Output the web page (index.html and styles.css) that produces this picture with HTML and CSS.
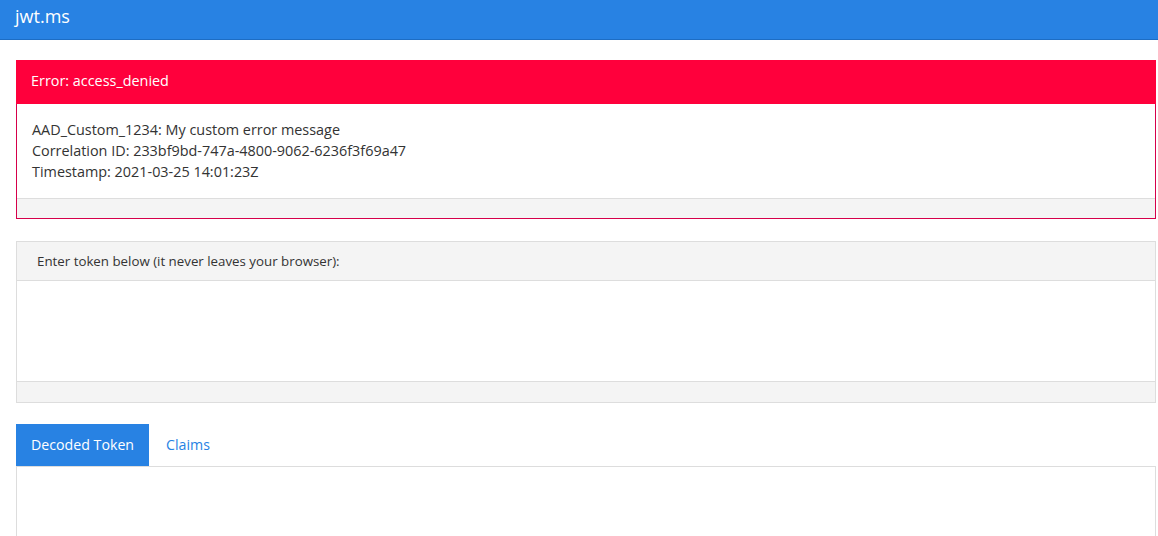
FILE: index.html
```html
<!DOCTYPE html>
<html lang="en">
<head>
    <meta charset="UTF-8">
    <title>jwt.ms</title>
    <link rel="stylesheet" href="styles.css">
</head>
<body>
    <!-- Top bar -->
    <div class="navbar">
        <span class="brand">jwt.ms</span>
    </div>

    <div class="container">
        <!-- Error panel -->
        <div class="panel panel-error">
            <div class="panel-heading">Error: access_denied</div>
            <div class="panel-body">
                <div>AAD_Custom_1234: My custom error message</div>
                <div>Correlation ID: 233bf9bd-747a-4800-9062-6236f3f69a47</div>
                <div>Timestamp: 2021-03-25 14:01:23Z</div>
            </div>
            <div class="panel-footer"></div>
        </div>

        <!-- Token input -->
        <div class="panel panel-token">
            <div class="panel-heading">Enter token below (it never leaves your browser):</div>
            <textarea class="token-input"></textarea>
            <div class="panel-footer"></div>
        </div>

        <!-- Tabs -->
        <div class="tabs">
            <a class="tab active">Decoded Token</a>
            <a class="tab">Claims</a>
        </div>
        <div class="tab-content"></div>
    </div>
</body>
</html>
```

FILE: styles.css
```css
* {
    margin: 0;
    padding: 0;
    box-sizing: border-box;
}

body {
    font-family: 'Open Sans', 'Noto Sans', sans-serif;
    font-size: 14.4px;
    color: #333;
    background-color: #fff;
    overflow: hidden;
}

/* Navbar */
.navbar {
    height: 40px;
    background-color: #2882e3;
    border-bottom: 1px solid #1d6dc4;
    padding: 0 15px;
    display: flex;
    align-items: center;
}

.brand {
    color: #fff;
    font-size: 18px;
    margin-top: -8px;
}

.container {
    padding: 20px 2px 0 16px;
}

/* Panels */
.panel {
    border: 1px solid #ddd;
    margin-bottom: 21px;
}

.panel-error {
    border-color: #d6004a;
    margin-bottom: 22px;
}

.panel-error .panel-heading {
    background-color: #ff003c;
    color: #fff;
    height: 44px;
    padding: 0 15px 3px;
    margin: -1px -1px 0;
    display: flex;
    align-items: center;
}

.panel-body {
    padding: 15px 15px 16px;
    line-height: 21px;
    height: 94px;
}

.panel-footer {
    background-color: #f4f4f4;
    border-top: 1px solid #ddd;
    height: 21px;
}

.panel-error .panel-footer {
    height: 20px;
}

.panel-token .panel-heading {
    background-color: #f4f4f4;
    border-bottom: 1px solid #ddd;
    height: 39px;
    padding: 0 20px;
    font-size: 13.3px;
    display: flex;
    align-items: center;
}

.token-input {
    display: block;
    width: 100%;
    height: 100px;
    border: none;
    resize: none;
    outline: none;
}

/* Tabs */
.tabs {
    display: flex;
    height: 42px;
}

.tab {
    padding: 0 15px 1px;
    display: flex;
    align-items: center;
    font-size: 14.2px;
    color: #2882e3;
    margin-right: 2px;
}

.tab.active {
    background-color: #2882e3;
    color: #fff;
}

.tab-content {
    border: 1px solid #ddd;
    height: 100px;
}
```
